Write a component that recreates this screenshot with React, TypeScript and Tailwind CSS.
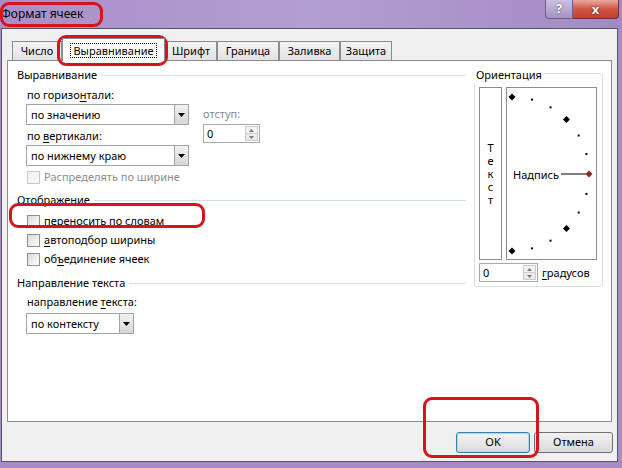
import React from "react";

const font = "font-['Noto_Sans',sans-serif]";

function GroupHeader({ title, className = "" }: { title: string; className?: string }) {
  return (
    <div className={`flex h-[16px] items-center ${className}`}>
      <span className="leading-[16px]">{title}</span>
      <div className="ml-[4px] h-px flex-1 bg-[#d5dfe5]" />
    </div>
  );
}

function Combo({ value, width, className = "" }: { value: string; width: string; className?: string }) {
  return (
    <div className={`flex h-[21px] border border-[#a3a3a3] bg-white ${width} ${className}`}>
      <span className="flex-1 pl-[4px] leading-[19px]">{value}</span>
      <div className="flex w-[14px] items-center justify-center border-l border-[#a3a3a3] bg-gradient-to-b from-[#f2f2f2] to-[#d6d6d6]">
        <svg width="7" height="4" viewBox="0 0 7 4">
          <path d="M0 0h7L3.5 4z" fill="#000" />
        </svg>
      </div>
    </div>
  );
}

function Spin({ width, className = "" }: { width: string; className?: string }) {
  return (
    <div className={`flex h-[19px] border border-[#a9a9a9] bg-white ${width} ${className}`}>
      <span className="flex-1 pl-[3px] leading-[17px]">0</span>
      <div className="my-px mr-px flex w-[13px] flex-col border border-[#cdcdcd]">
        <div className="flex flex-1 items-center justify-center border-b border-[#cdcdcd] bg-[#f3f3f3]">
          <svg width="5" height="3" viewBox="0 0 5 3">
            <path d="M0 3h5L2.5 0z" fill="#7a7a7a" />
          </svg>
        </div>
        <div className="flex flex-1 items-center justify-center bg-[#ebebeb]">
          <svg width="5" height="3" viewBox="0 0 5 3">
            <path d="M0 0h5L2.5 3z" fill="#7a7a7a" />
          </svg>
        </div>
      </div>
    </div>
  );
}

function Check({ label, disabled, className = "" }: { label: React.ReactNode; disabled?: boolean; className?: string }) {
  return (
    <div className={`flex h-[16px] items-center ${className}`}>
      <div
        className={`h-[13px] w-[13px] border ${
          disabled ? "border-[#cacaca] bg-[#f5f5f5]" : "border-[#8f8f8f] bg-gradient-to-br from-[#dadada] to-white"
        }`}
      />
      <span className={`ml-[4px] leading-[16px] ${disabled ? "text-[#8d8d8d]" : ""}`}>{label}</span>
    </div>
  );
}

const U = ({ c }: { c: string }) => <span className="underline underline-offset-2">{c}</span>;

function Dial() {
  const cx = 5;
  const cy = 86;
  const r = 77;
  const angles = [90, 75, 60, 45, 30, 15, 0, -15, -30, -45, -60, -75, -90];
  return (
    <div className="relative h-[173px] w-[91px] border border-[#8c8c8c] bg-white">
      <svg className="absolute inset-0" width="89" height="171" viewBox="0 0 89 171">
        {angles.map((a) => {
          const x = cx + r * Math.cos((a * Math.PI) / 180);
          const y = cy - r * Math.sin((a * Math.PI) / 180);
          if (a === 0)
            return <path key={a} d={`M${x} ${y - 3.5}L${x + 3.5} ${y}L${x} ${y + 3.5}L${x - 3.5} ${y}Z`} fill="#8b2a2a" />;
          if (Math.abs(a) % 45 === 0)
            return <path key={a} d={`M${x} ${y - 3.5}L${x + 3.5} ${y}L${x} ${y + 3.5}L${x - 3.5} ${y}Z`} fill="#000" />;
          return <rect key={a} x={x - 1} y={y - 1} width="2" height="2" fill="#000" />;
        })}
        <line x1="54" y1={cy} x2="79" y2={cy} stroke="#000" strokeWidth="1" />
      </svg>
      <span className="absolute left-[6px] top-[79px] leading-[16px]">Надпись</span>
    </div>
  );
}

export default function App() {
  const tabs = [
    { t: "Число", w: "w-[50px]" },
    { t: "Выравнивание", w: "w-[103px]", active: true },
    { t: "Шрифт", w: "w-[52px]" },
    { t: "Граница", w: "w-[62px]" },
    { t: "Заливка", w: "w-[61px]" },
    { t: "Защита", w: "w-[52px]" },
  ];
  return (
    <div className={`relative flex h-[468px] w-[622px] flex-col overflow-hidden bg-[#a68cc5] text-[11px] text-black ${font}`}>
      {/* title bar */}
      <div className="flex h-[28px] shrink-0 items-start justify-between bg-gradient-to-r from-[#a98fc9] via-[#b39ed1] to-[#a48ac4]">
        <span className="pl-[1px] pt-[6px] text-[12px] leading-[16px]">Формат ячеек</span>
        <div className="mr-[3px] flex">
          <div className="flex h-[19px] w-[28px] items-center justify-center rounded-bl-[4px] border border-t-0 border-[#6e5c8a] bg-gradient-to-b from-[#cdc0e2] to-[#a593c3] text-[13px] font-bold text-white [text-shadow:0_0_2px_#333]">
            ?
          </div>
          <div className="flex h-[19px] w-[46px] items-center justify-center rounded-br-[4px] border border-l-0 border-t-0 border-[#6f3030] bg-gradient-to-b from-[#e9a99f] via-[#d25542] to-[#c2402f] text-[13px] font-bold leading-none text-white [text-shadow:0_0_2px_#400]">
            x
          </div>
        </div>
      </div>

      {/* client area */}
      <div className="mb-[6px] ml-[1px] mr-[4px] flex flex-1 flex-col border border-[#545463] bg-[#f0f0f0]">
        <div className="flex h-[31px] items-end px-[5px] pl-[10px] pt-[9px]">
          {tabs.map((tab) =>
            tab.active ? (
              <div
                key={tab.t}
                className={`relative z-10 -mb-px flex h-[23px] items-center justify-center border border-b-0 border-[#898c95] bg-white ${tab.w}`}
              >
                <span className="border border-dotted border-black px-[2px] leading-[13px]">{tab.t}</span>
              </div>
            ) : (
              <div
                key={tab.t}
                className={`flex h-[19px] items-center justify-center border border-b-0 border-[#898c95] bg-gradient-to-b from-[#f3f3f3] to-[#e2e2e2] ${tab.w}`}
              >
                {tab.t}
              </div>
            )
          )}
        </div>

        <div className="mx-[5px] flex h-[362px] border border-[#898c95] bg-white">
          {/* left column */}
          <div className="ml-[9px] mt-[6px] flex w-[449px] flex-col">
            <GroupHeader title="Выравнивание" />
            <div className="flex">
              <div className="ml-[9px] flex flex-col">
                <span className="mt-[4px] pl-px leading-[16px]">
                  по горизо<U c="н" />тали:
                </span>
                <Combo value="по значению" width="w-[163px]" className="mt-[1px]" />
                <span className="mt-[3px] pl-px leading-[16px]">
                  по <U c="в" />ертикали:
                </span>
                <Combo value="по нижнему краю" width="w-[163px]" className="mt-[1px]" />
              </div>
              <div className="ml-[14px] flex flex-col">
                <span className="mt-[23px] leading-[16px] text-[#8a8a8a]">отступ:</span>
                <Spin width="w-[57px]" className="mt-[2px]" />
              </div>
            </div>
            <Check label="Распределять по ширине" disabled className="ml-[10px] mt-[3px]" />

            <GroupHeader title="Отображение" className="mt-[7px]" />
            <Check
              className="ml-[10px] mt-[5px]"
              label={
                <>
                  перено<U c="с" />ить по словам
                </>
              }
            />
            <Check
              className="ml-[10px] mt-[3px]"
              label={
                <>
                  <U c="а" />втоподбор ширины
                </>
              }
            />
            <Check
              className="ml-[10px] mt-[3px]"
              label={
                <>
                  об<U c="ъ" />единение ячеек
                </>
              }
            />

            <GroupHeader title="Направление текста" className="mt-[8px]" />
            <span className="ml-[10px] mt-[3px] leading-[16px]">
              направление <U c="т" />екста:
            </span>
            <Combo value="по контексту" width="w-[108px]" className="ml-[9px] mt-[3px]" />
          </div>

          {/* orientation */}
          <div className="ml-[8px] mt-[12px] flex h-[214px] w-[129px] flex-col rounded-[3px] border border-[#d5dfe5]">
            <span className="-ml-px -mt-[7px] self-start bg-white pl-[2px] pr-[2px] leading-[16px]">Ориентация</span>
            <div className="ml-[4px] mt-[4px] flex gap-[4px]">
              <div className="flex h-[173px] w-[23px] flex-col items-center justify-center border border-[#8c8c8c] bg-white">
                <span className="block h-[13px] leading-[13px]">Т</span>
                <span className="block h-[13px] leading-[13px]">е</span>
                <span className="block h-[13px] leading-[13px]">к</span>
                <span className="block h-[13px] leading-[13px]">с</span>
                <span className="block h-[13px] leading-[13px]">т</span>
              </div>
              <Dial />
            </div>
            <div className="ml-[4px] mt-[3px] flex items-center">
              <Spin width="w-[59px]" />
              <span className="ml-[4px] leading-[16px]">
                <U c="г" />радусов
              </span>
            </div>
          </div>
        </div>

        {/* buttons */}
        <div className="mt-[10px] flex justify-end gap-[4px] pr-[4px]">
          <div className="flex h-[21px] w-[74px] items-center justify-center rounded-[3px] border border-[#3c7fb1] bg-gradient-to-b from-[#f4f4f4] to-[#dcdcdc] shadow-[inset_0_0_0_1px_#a6d9f4]">
            OK
          </div>
          <div className="flex h-[21px] w-[79px] items-center justify-center rounded-[3px] border border-[#707070] bg-gradient-to-b from-[#f2f2f2] to-[#dadada]">
            Отмена
          </div>
        </div>
      </div>

      {/* red annotation marks */}
      <div className="pointer-events-none absolute left-[0px] top-[2px] h-[25px] w-[103px] rounded-[9px] border-[3px] border-[#d6141c]" />
      <div className="pointer-events-none absolute left-[57px] top-[35px] h-[31px] w-[111px] rounded-[9px] border-[3px] border-[#d6141c]" />
      <div className="pointer-events-none absolute left-[9px] top-[203px] h-[25px] w-[196px] rounded-[9px] border-[3px] border-[#d6141c]" />
      <div className="pointer-events-none absolute left-[423px] top-[397px] h-[61px] w-[116px] rounded-[9px] border-[3px] border-[#d6141c]" />
    </div>
  );
}
